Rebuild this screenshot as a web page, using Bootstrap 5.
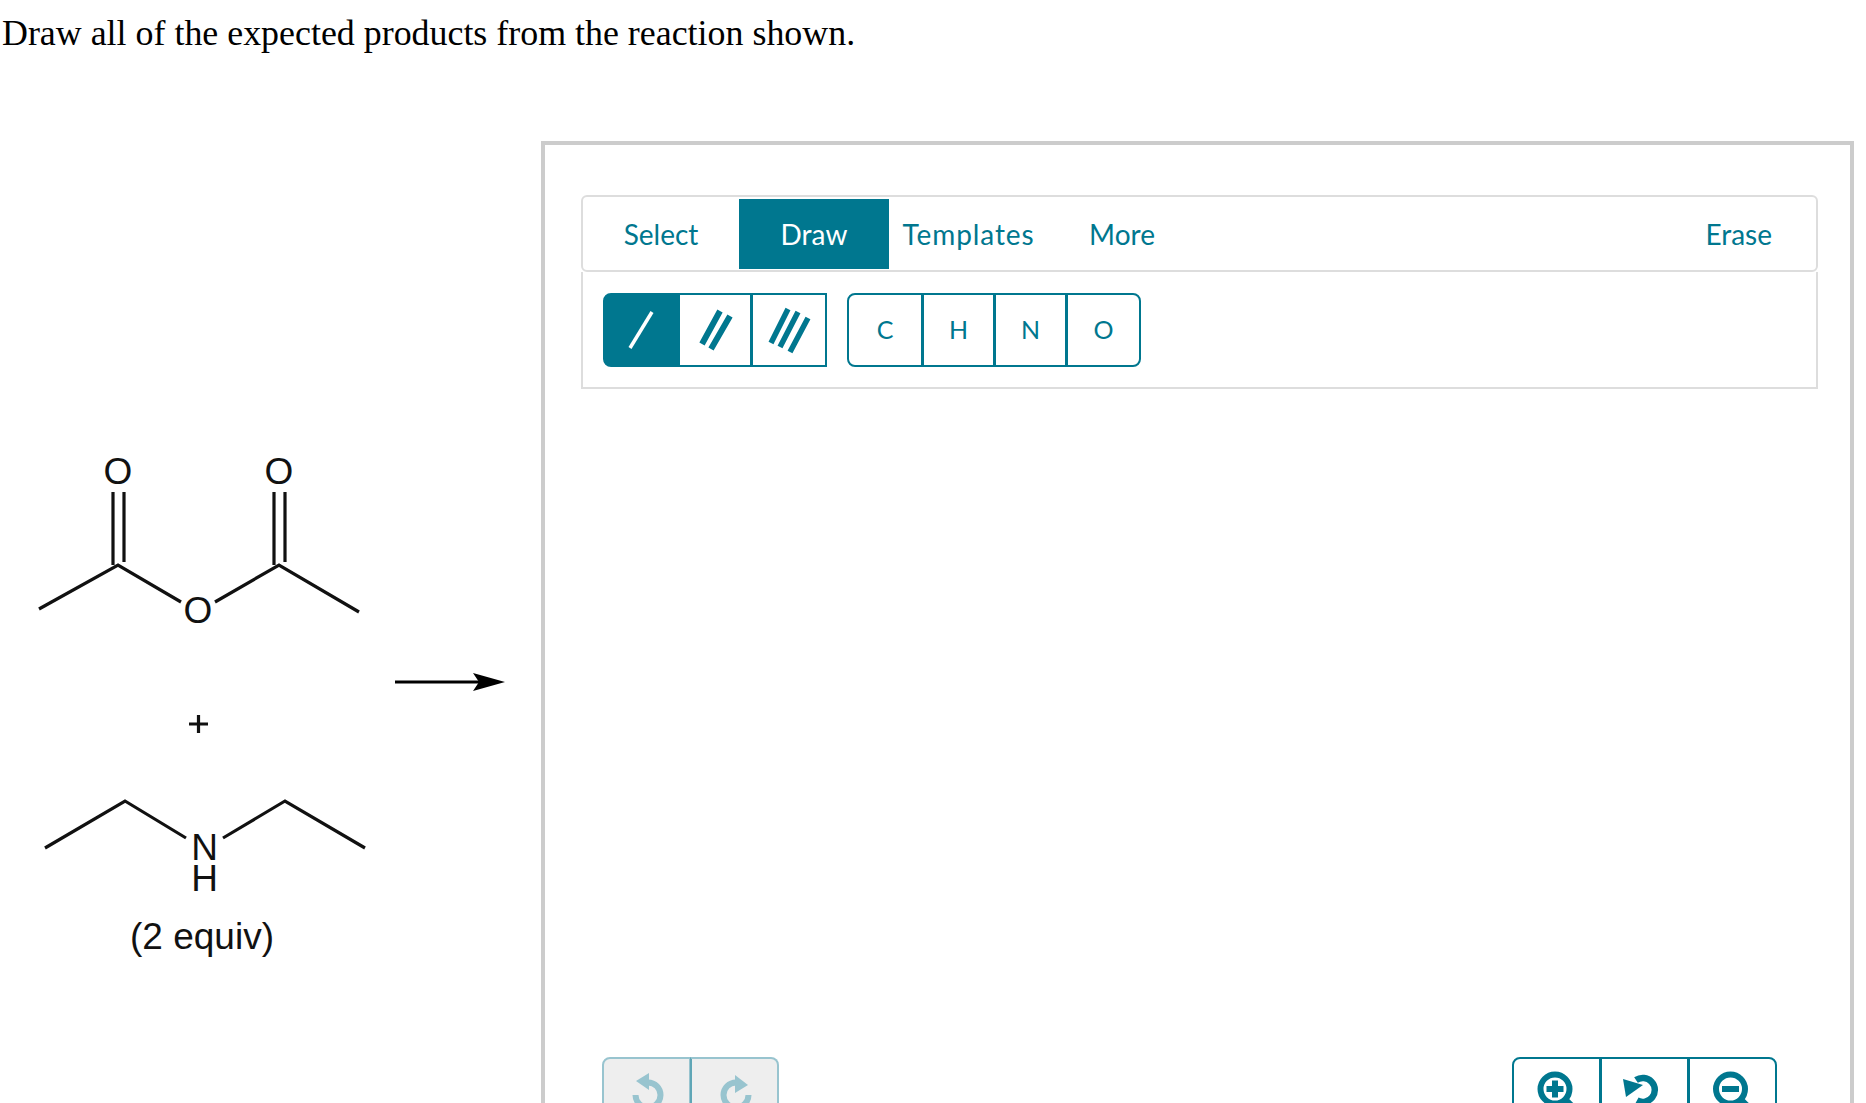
<!DOCTYPE html>
<html>
<head>
    <title>Draw products</title>
    <meta charset="UTF-8">
    <link href="https://cdn.jsdelivr.net/npm/bootstrap@5.3.0/dist/css/bootstrap.min.css" rel="stylesheet">
    <style>
        html, body {
            height: 100%;
            overflow: hidden;
            background: #fff;
        }
        .question-text {
            font-family: "Liberation Serif", serif;
            font-size: 35.900px;
            line-height: 37px;
            color: #000;
            margin: 15px 0 0 2px;
        }
        .work-row {
            margin-top: 89px;
        }
        .reaction-col {
            width: 541px;
            flex: none;
        }
        .reaction-col svg {
            display: block;
        }
        .reaction-col text {
            font-family: "Liberation Sans", Arial, sans-serif;
            font-size: 37px;
            fill: #111;
        }
        .sketch-frame {
            width: 1313px;
            flex: none;
            height: 1100px;
            border: 4px solid #ccc;
            padding: 50px 32px 0 36px;
        }
        .tool-tabs {
            height: 77px;
            border: 2px solid #ddd;
            border-radius: 6px;
            padding: 2px 0 1px 0;
            font-family: Lato, "Open Sans", sans-serif;
            font-size: 28px;
            letter-spacing: .5px;
        }
        .tool-tab {
            color: #00778f;
            background: none;
            border: 0;
            padding: 0;
            height: 70px;
            line-height: 70px;
            text-align: center;
        }
        .tool-tab.is-on {
            background: #00778f;
            color: #fff;
        }
        .tab-select { width: 156px; }
        .tab-draw { width: 150px; }
        .tab-templates { width: 159px; letter-spacing: .9px; }
        .tab-more { width: 148px; }
        .tool-tab.tab-erase {
            padding: 0 44px 0 0;
        }
        .bond-panel {
            height: 117px;
            border: 2px solid #ddd;
            border-top: 0;
            padding: 21px 0 0 20px;
            gap: 20px;
        }
        .chem-btn.btn {
            height: 74px;
            padding: 0;
            background: #fff;
            border: 2px solid #00778f;
            color: #00778f;
            font-family: Lato, "Open Sans", sans-serif;
            font-size: 25px;
            display: flex;
            align-items: center;
            justify-content: center;
        }
        .chem-btn.btn.is-on {
            background: #00778f;
        }
        .cell-a { width: 76px; }
        .cell-b { width: 75px; }
        .cell-c { width: 73px; }
        .cell-d { width: 89px; }
        .cell-e { width: 74px; }
        .cell-f { width: 76px; }
        .canvas-gap {
            height: 668px;
        }
        .view-row {
            padding: 0 41px 0 21px;
        }
        .chem-btn.btn.is-off {
            background: #eee;
            border-color: #98c4cf;
            opacity: 1;
        }
        .chem-btn svg {
            display: block;
        }
        .btn-group > .chem-btn.btn {
            flex: none;
        }
        .btn-group .chem-btn.btn {
            border-radius: 0;
        }
        .btn-group .chem-btn.btn:first-child {
            border-top-left-radius: 8px;
            border-bottom-left-radius: 8px;
        }
        .btn-group.rounded-end-group .chem-btn.btn:last-child {
            border-top-right-radius: 8px;
            border-bottom-right-radius: 8px;
        }
        .chem-btn.btn.tall-cell {
            height: 94px;
            align-items: flex-start;
            padding-top: 9px;
        }
        .btn-group .divider-strong {
            border-left-color: #5fa6b6 !important;
        }
    </style>
</head>
<body>
    <p class="question-text">Draw all of the expected products from the reaction shown.</p>

    <div class="work-row d-flex">
        <div class="reaction-col">
            <svg width="541" height="962" viewBox="0 141 541 962" fill="none" stroke="#111" stroke-width="3.200">
                <path d="M39 609L118 565L181 602M215 602L279 565L359 612M113 492V565M124 492V562M274 492V565M285 492V562"/>
                <text x="118" y="484" text-anchor="middle" stroke="none">O</text>
                <text x="279" y="484" text-anchor="middle" stroke="none">O</text>
                <text x="198" y="623" text-anchor="middle" stroke="none">O</text>
                <path d="M395 682H480" stroke="#000"/>
                <path d="M473 673L505 682L473 691L479 682Z" fill="#000" stroke="none"/>
                <path d="M189 724H208M198.500 715V733"/>
                <path d="M45 848L125 801L186 838M223 838L285 801L365 848"/>
                <text x="204.500" y="860" text-anchor="middle" stroke="none">N</text>
                <text x="204.500" y="891" text-anchor="middle" stroke="none">H</text>
                <text x="202" y="949" text-anchor="middle" stroke="none">(2 equiv)</text>
            </svg>
        </div>

        <div class="sketch-frame">
            <div class="tool-tabs d-flex">
                <button type="button" class="tool-tab tab-select">Select</button>
                <button type="button" class="tool-tab tab-draw is-on">Draw</button>
                <button type="button" class="tool-tab tab-templates">Templates</button>
                <button type="button" class="tool-tab tab-more">More</button>
                <button type="button" class="tool-tab tab-erase ms-auto">Erase</button>
            </div>
            <div class="bond-panel d-flex">
                <div class="btn-group">
                    <button type="button" class="btn chem-btn is-on cell-a" aria-label="Single bond">
                        <svg width="30" height="44" viewBox="0 0 30 44" stroke="#fff" stroke-width="3.500"><path d="M4 40L26 4"/></svg>
                    </button>
                    <button type="button" class="btn chem-btn cell-e" aria-label="Double bond">
                        <svg width="36" height="44" viewBox="0 0 36 44" stroke="#00778f" stroke-width="6"><path d="M5 36L23 3M14 41L33 8"/></svg>
                    </button>
                    <button type="button" class="btn chem-btn cell-f" aria-label="Triple bond">
                        <svg width="44" height="48" viewBox="0 0 44 48" stroke="#00778f" stroke-width="5.500"><path d="M4 37L21 3M13 41L31 6M23 46L41 12"/></svg>
                    </button>
                </div>
                <div class="btn-group rounded-end-group">
                    <button type="button" class="btn chem-btn cell-a">C</button>
                    <button type="button" class="btn chem-btn cell-c">H</button>
                    <button type="button" class="btn chem-btn cell-c">N</button>
                    <button type="button" class="btn chem-btn cell-b">O</button>
                </div>
            </div>
            <div class="canvas-gap"></div>
            <div class="view-row d-flex justify-content-between">
                <div class="btn-group rounded-end-group">
                    <button type="button" class="btn chem-btn is-off tall-cell cell-d" aria-label="Undo" disabled>
                        <svg width="40" height="44" viewBox="0 0 40 44" fill="none" stroke="#98c4cf" stroke-width="6"><path d="M21 14.500A12.500 12.500 0 1 1 8.500 27"/><path d="M9 13L22 5V22Z" fill="#98c4cf" stroke="none"/></svg>
                    </button>
                    <button type="button" class="btn chem-btn is-off divider-strong tall-cell cell-d" aria-label="Redo" disabled>
                        <svg width="40" height="44" viewBox="0 0 40 44" fill="none" stroke="#98c4cf" stroke-width="6"><path d="M21 14.500A12.500 12.500 0 1 0 33.500 27"/><path d="M33 17L20 7V25Z" fill="#98c4cf" stroke="none"/></svg>
                    </button>
                </div>
                <div class="btn-group rounded-end-group">
                    <button type="button" class="btn chem-btn tall-cell cell-d" aria-label="Zoom in">
                        <svg width="44" height="44" viewBox="0 0 44 44" fill="none" stroke="#00778f" stroke-width="6"><circle cx="20" cy="21" r="14.500"/><path d="M31 32L40 41"/><path d="M20 12.500V29.500M11.500 21H28.500"/></svg>
                    </button>
                    <button type="button" class="btn chem-btn tall-cell cell-d" aria-label="Reset zoom">
                        <svg width="44" height="44" viewBox="0 0 44 44" fill="none" stroke="#00778f" stroke-width="6.500"><path d="M13 12A12 12 0 1 1 14 32.400"/><path d="M0 11L20 17L3 29Z" fill="#00778f" stroke="none"/></svg>
                    </button>
                    <button type="button" class="btn chem-btn tall-cell cell-d" aria-label="Zoom out">
                        <svg width="44" height="44" viewBox="0 0 44 44" fill="none" stroke="#00778f" stroke-width="6"><circle cx="19.500" cy="21" r="14.500"/><path d="M30.500 32L39.500 41"/><path d="M11 21H28"/></svg>
                    </button>
                </div>
            </div>
        </div>
    </div>

    <script src="https://cdn.jsdelivr.net/npm/bootstrap@5.3.0/dist/js/bootstrap.bundle.min.js"></script>
</body>
</html>
